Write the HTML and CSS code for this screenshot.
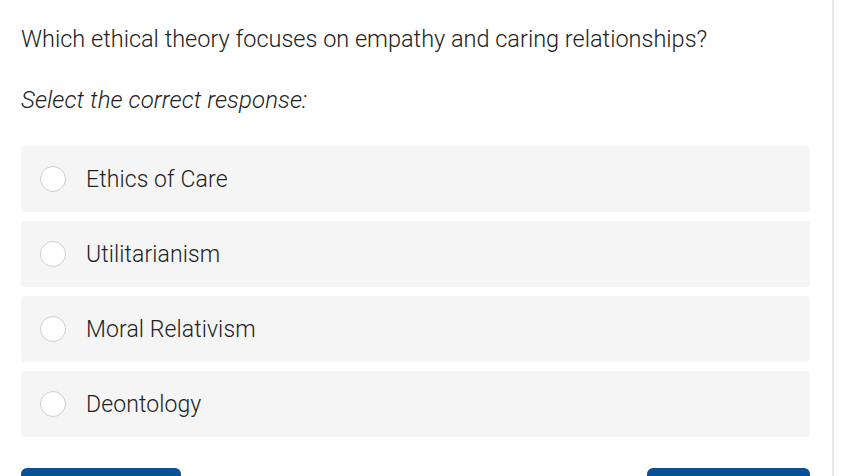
FILE: index.html
```html
<!DOCTYPE html>
<html lang="en">
<head>
    <meta charset="UTF-8">
    <meta name="viewport" content="width=device-width, initial-scale=1.0">
    <title>Question</title>
    <link rel="stylesheet" href="styles.css">
</head>
<body>
    <div class="page">
        <p class="question">Which ethical theory focuses on empathy and caring relationships?</p>
        <p class="prompt">Select the correct response:</p>

        <div class="options">
            <label class="option">
                <input type="radio" name="answer" value="care">
                <span class="radio"></span>
                <span class="option-text">Ethics of Care</span>
            </label>
            <label class="option">
                <input type="radio" name="answer" value="util">
                <span class="radio"></span>
                <span class="option-text">Utilitarianism</span>
            </label>
            <label class="option">
                <input type="radio" name="answer" value="rel">
                <span class="radio"></span>
                <span class="option-text">Moral Relativism</span>
            </label>
            <label class="option">
                <input type="radio" name="answer" value="deon">
                <span class="radio"></span>
                <span class="option-text">Deontology</span>
            </label>
        </div>

        <div class="actions">
            <button class="btn btn-back" type="button"></button>
            <button class="btn btn-next" type="button"></button>
        </div>
    </div>
</body>
</html>
```

FILE: styles.css
```css
body {
    margin: 0;
    font-family: Roboto, "Liberation Sans", Arial, sans-serif;
    font-weight: 300;
    color: #222;
    background: #fff;
    overflow: hidden;
}

.page {
    width: 834px;
    min-height: 100vh;
    box-sizing: border-box;
    padding: 26px 22px 0 21px;
    border-right: 2px solid #e8e8e8;
}

.question {
    margin: 0;
    font-size: 23.5px;
    line-height: 26px;
}

.prompt {
    margin: 35px 0 0;
    font-size: 24px;
    line-height: 26px;
    font-style: italic;
    letter-spacing: 0.1px;
}

.options {
    display: flex;
    flex-direction: column;
    gap: 9px;
    margin-top: 33px;
}

.option {
    display: flex;
    align-items: center;
    gap: 20px;
    height: 66px;
    padding-left: 19px;
    background: #f5f5f5;
    border-radius: 4px;
    cursor: pointer;
}

.option input {
    display: none;
}

.radio {
    width: 24px;
    height: 24px;
    border: 1px solid #cfcfcf;
    border-radius: 50%;
    background: #fff;
}

.option input:checked + .radio {
    border: 7px solid #0b4f94;
    width: 12px;
    height: 12px;
}

.option-text {
    font-size: 23px;
    letter-spacing: 0.1px;
}

.actions {
    display: flex;
    justify-content: space-between;
    margin-top: 31px;
}

.btn {
    height: 44px;
    border: none;
    border-radius: 6px;
    background: #0b4f94;
    cursor: pointer;
}

.btn-back {
    width: 160px;
}

.btn-next {
    width: 163px;
}
```
